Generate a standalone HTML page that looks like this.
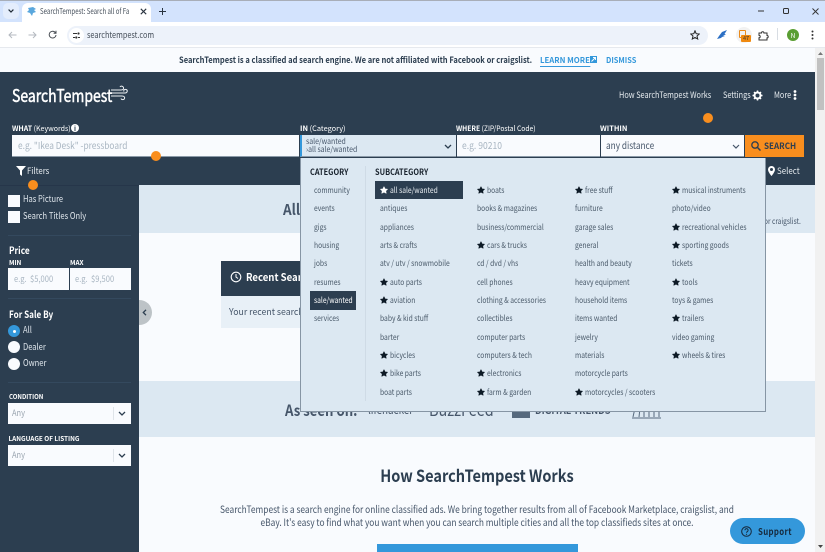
<!DOCTYPE html>
<html lang="en"><head><meta charset="utf-8"><title>SearchTempest</title>
<style>
*{box-sizing:border-box}
html,body{margin:0;padding:0}
body{width:825px;height:552px;overflow:hidden;position:relative;background:#f9fbfe;font-family:"Noto Sans CJK JP","Liberation Sans",sans-serif;color:#2c3e50}
.a{position:absolute;white-space:nowrap}
.t{transform-origin:0 50%}
body>svg{position:absolute;display:block}
.lbl{font-size:7.400px;line-height:10px;color:#fff}
.lbl b{font-weight:700}
.ph{color:#a9b6c2}
.inp{position:absolute;background:#f9fbfe}
ul{position:absolute;margin:0;padding:0;list-style:none;font-size:8px;line-height:18.350px;color:#4a5a6a;white-space:nowrap;transform:scaleX(.84);transform-origin:0 0}
li svg{display:inline-block;width:9.500px;height:8px;margin-right:2.400px;vertical-align:-1px}
.sd{font-size:9px;color:#dfe6ec;line-height:12px;transform:scaleX(.84)}
.cb{position:absolute;left:8px;width:12px;height:12px;background:#f9fbfe}
.rd{position:absolute;left:8px;width:12px;height:12px;background:#f9fbfe;border-radius:50%}
.hr{position:absolute;left:8px;width:123px;height:1px;background:#34495e}
.dot{position:absolute;width:10px;height:10px;border-radius:50%;background:#f98e1e}
</style></head><body>
<svg width="0" height="0" style="position:absolute"><symbol id="s" viewBox="0 0 10 10" preserveAspectRatio="none"><path d="M5 1 6.300 3.700 9.300 4.100 7.100 6.100 7.700 9 5 7.600 2.300 9 2.900 6.100 .7 4.100 3.700 3.700z" fill="currentColor" stroke="currentColor" stroke-width=".9" stroke-linejoin="round"/></symbol></svg>

<!-- browser chrome -->
<div class="a" style="left:0;top:0;width:825px;height:22px;background:#d3e3fd;border-top:1px solid #a8aeb8"></div>
<div class="a" style="left:3px;top:3px;width:16px;height:16px;border-radius:5px;background:#e4edfc"></div>
<svg style="left:8px;top:9px" width="6" height="4" viewBox="0 0 6 4"><path d="M.6.6 3 3 5.400.6" fill="none" stroke="#1f2a36" stroke-width="1.200"/></svg>
<div class="a" style="left:22px;top:3px;width:129px;height:20px;background:#fff;border-radius:6px 6px 0 0"></div>
<svg style="left:27px;top:7px" width="10" height="9" viewBox="0 0 10 9"><path d="M1 1 6 0l3 2-2 1 2 2-3 1-1 3-2-3-3-1 2-2z" fill="#5aa7dd"/></svg>
<div class="a t" style="left:40px;top:5px;font-size:7.800px;line-height:13px;color:#46505c;width:118px;overflow:hidden;transform:scaleX(.78)">SearchTempest: Search all of Fa</div>
<svg style="left:140px;top:8px" width="7" height="7" viewBox="0 0 7 7"><path d="M.8.8 6.200 6.200M6.200.8.8 6.200" stroke="#2a3440" stroke-width="1.100"/></svg>
<svg style="left:158px;top:7px" width="9" height="9" viewBox="0 0 9 9"><path d="M4.500 1v7M1 4.500h7" stroke="#2a3440" stroke-width="1"/></svg>
<svg style="left:757px;top:10px" width="8" height="2" viewBox="0 0 8 2"><path d="M1 1h6" stroke="#333" stroke-width="1"/></svg>
<div class="a" style="left:783px;top:8px;width:6px;height:6px;border:1px solid #333;border-radius:1.500px"></div>
<svg style="left:812px;top:8px" width="7" height="7" viewBox="0 0 7 7"><path d="M.5.5 6.500 6.500M6.500.5.5 6.500" stroke="#333" stroke-width=".9"/></svg>

<div class="a" style="left:0;top:22px;width:825px;height:26px;background:#fff;border-bottom:1px solid #e6e9ee"></div>
<svg style="left:8px;top:31px" width="9" height="8" viewBox="0 0 9 8"><path d="M8.500 4H1M4 1 1 4l3 3" fill="none" stroke="#b4b9c0" stroke-width="1"/></svg>
<svg style="left:28px;top:31px" width="9" height="8" viewBox="0 0 9 8"><path d="M.5 4H8M5 1l3 3-3 3" fill="none" stroke="#b4b9c0" stroke-width="1"/></svg>
<svg style="left:48px;top:30px" width="9" height="9" viewBox="0 0 9 9"><path d="M7.600 3A3.400 3.400 0 1 0 8 5M8 .8V3.200H5.600" fill="none" stroke="#4a4f55" stroke-width="1"/></svg>
<div class="a" style="left:67px;top:26px;width:641px;height:19px;border-radius:10px;background:#edf2fa"></div>
<div class="a" style="left:69px;top:28px;width:15px;height:15px;border-radius:50%;background:#fff"></div>
<svg style="left:73px;top:32px" width="7" height="7" viewBox="0 0 7 7"><path d="M0 1.500h4M0 5.500h2M5 5.500h2" stroke="#333" stroke-width="1"/><circle cx="5.500" cy="1.500" r="1.100" fill="#333"/><circle cx="3.300" cy="5.500" r="1.100" fill="#333"/></svg>
<div class="a t" style="left:87px;top:28px;font-size:8.600px;line-height:15px;color:#444d58;transform:scaleX(.85)">searchtempest.com</div>
<svg style="left:690px;top:30px" width="10" height="10" viewBox="0 0 10 10"><path d="M5 .8 6.200 3.700 9.300 4 7 6l.7 3L5 7.400 2.300 9 3 6 .7 4l3.100-.3z" fill="none" stroke="#222" stroke-width="1"/></svg>
<svg style="left:717px;top:30px" width="11" height="10" viewBox="0 0 11 10"><path d="M10 0 5 2 2 6 0 9l4-1 1-1 3-1-2-.5 3-1-1.500-.5z" fill="#2b6fc4"/></svg>
<div class="a" style="left:736px;top:27px;width:16px;height:16px;border-radius:50%;background:#f2f2f2"></div>
<div class="a" style="left:739px;top:30px;width:7px;height:8px;border:1.500px solid #e98a1a;border-radius:1px"></div>
<div class="a" style="left:741px;top:35px;width:10px;height:7px;background:#f08a10;color:#333;font-size:5.500px;line-height:7px;text-align:center;border-radius:1px">47</div>
<svg style="left:758px;top:30px" width="11" height="11" viewBox="0 0 11 11"><path d="M1 3h2.500a1.200 1.200 0 0 1 2.400 0H9v2.500a1.200 1.200 0 0 1 0 2.400V10H1V7.800a1.200 1.200 0 0 0 0-2.400z" fill="none" stroke="#333" stroke-width="1"/></svg>
<div class="a" style="left:777px;top:28px;width:1px;height:12px;background:#d8dde3"></div>
<div class="a" style="left:787px;top:29px;width:12px;height:12px;border-radius:50%;background:#5a9e32;color:#fff;font-size:6.500px;line-height:12px;text-align:center">N</div>
<svg style="left:811px;top:30px" width="3" height="10" viewBox="0 0 3 10"><circle cx="1.500" cy="1.500" r="1" fill="#333"/><circle cx="1.500" cy="5" r="1" fill="#333"/><circle cx="1.500" cy="8.500" r="1" fill="#333"/></svg>

<!-- infobar -->
<div class="a" style="left:0;top:48px;width:815px;height:24px;background:#f9fbfe"></div>
<div class="a t" style="left:179px;top:52px;font-size:8.700px;line-height:15px;font-weight:700;color:#2c3e50;transform:scaleX(.868)">SearchTempest is a classified ad search engine. We are not affiliated with Facebook or craigslist.</div>
<div class="a t" style="left:540px;top:53px;font-size:8.200px;line-height:14px;font-weight:700;color:#3498db;border-bottom:1px solid #3498db;height:14px;transform:scaleX(.95)">LEARN MORE</div>
<div class="a" style="left:590px;top:56px;width:7px;height:7px;background:#3498db"></div>
<svg style="left:591px;top:57px" width="5" height="5" viewBox="0 0 5 5"><path d="M.5 4.500 4.500.5M2 .5h2.500V3" fill="none" stroke="#fff" stroke-width=".9"/></svg>
<div class="a t" style="left:606px;top:53px;font-size:8.200px;line-height:14px;font-weight:700;color:#3498db;transform:scaleX(.91)">DISMISS</div>

<!-- scrollbar -->
<div class="a" style="left:815px;top:48px;width:10px;height:504px;background:#f1f1f1"></div>
<div class="a" style="left:817px;top:58px;width:7px;height:52px;background:#c1c1c1"></div>
<svg style="left:818px;top:52px" width="5" height="3" viewBox="0 0 5 3"><path d="M2.500 0 5 3H0z" fill="#777"/></svg>
<svg style="left:818px;top:545px" width="5" height="3" viewBox="0 0 5 3"><path d="M0 0h5L2.500 3z" fill="#444"/></svg>

<!-- dark header -->
<div class="a" style="left:0;top:72px;width:815px;height:113px;background:#2c3e50"></div>
<div class="a" style="left:0;top:185px;width:139px;height:367px;background:#2c3e50"></div>
<div class="a t" style="left:12px;top:84px;font-size:17.500px;line-height:24px;color:#fff;-webkit-text-stroke:.5px #fff;transform:scaleX(.8)">SearchTempest</div>
<svg style="left:110px;top:84px" width="19" height="18" viewBox="0 0 19 18"><g fill="none" stroke="#eef2f5" stroke-width="1"><path d="M1 6h10c2 0 3-1 2.500-2.500S10.500 1.500 10 3"/><path d="M2 9h13c2.500 0 3-3 1-3.500S13.500 6.500 14 7.500"/><path d="M1 12h11c2 0 3 1 2.500 2.500S11.500 16 11 14.500"/></g></svg>
<div class="a t" style="left:619px;top:88px;font-size:8.700px;line-height:14px;color:#e6ebef;transform:scaleX(.84)">How SearchTempest Works</div>
<div class="a t" style="left:723px;top:88px;font-size:8.700px;line-height:14px;color:#e6ebef;transform:scaleX(.84)">Settings</div>
<svg style="left:752px;top:90px" width="11" height="11" viewBox="0 0 11 11"><circle cx="5.500" cy="5.500" r="3" fill="none" stroke="#fff" stroke-width="2"/><path d="M5.500 .5v2M5.500 8.500v2M.5 5.500h2M8.500 5.500h2M2 2l1.400 1.400M7.600 7.600 9 9M9 2 7.600 3.400M3.400 7.600 2 9" stroke="#fff" stroke-width="1.500"/></svg>
<div class="a t" style="left:774px;top:88px;font-size:8.700px;line-height:14px;color:#e6ebef;transform:scaleX(.84)">More</div>
<svg style="left:793px;top:90px" width="4" height="10" viewBox="0 0 4 10"><circle cx="2" cy="1.500" r="1.400" fill="#fff"/><circle cx="2" cy="5" r="1.400" fill="#fff"/><circle cx="2" cy="8.500" r="1.400" fill="#fff"/></svg>

<!-- search form -->
<div class="a lbl t" style="left:12px;top:124px;transform:scaleX(.95)"><b>WHAT</b> (Keywords)</div>
<div class="a" style="left:71px;top:124px;width:8px;height:8px;border-radius:50%;background:#fff;color:#2c3e50;font-size:6.500px;line-height:8px;text-align:center;font-weight:700">i</div>
<div class="a lbl" style="left:300px;top:124px"><b>IN</b> (Category)</div>
<div class="a lbl t" style="left:456px;top:124px;transform:scaleX(.91)"><b>WHERE</b> (ZIP/Postal Code)</div>
<div class="a lbl" style="left:600px;top:124px"><b>WITHIN</b></div>

<div class="inp" style="left:12px;top:135px;width:287px;height:22px;border-bottom:1px solid #8b9aa8"></div>
<div class="a ph t" style="left:18px;top:138px;font-size:9.500px;line-height:15px;transform:scaleX(.88)">e.g. "Ikea Desk" -pressboard</div>
<div class="a" style="left:300px;top:135px;width:156px;height:22px;background:#dce8f2;border-left:2px solid #3498db;border-bottom:1px solid #8b9aa8"></div>
<div class="a t" style="left:306px;top:138px;font-size:7.600px;line-height:7.500px;color:#46566a;transform:scaleX(.91)">sale/wanted<br>&rsaquo;all sale/wanted</div>
<svg style="left:444px;top:144px" width="8" height="5" viewBox="0 0 8 5"><path d="M1 1l3 3 3-3" fill="none" stroke="#2c3e50" stroke-width="1.300"/></svg>
<div class="inp" style="left:457px;top:135px;width:143px;height:22px;border-bottom:1px solid #8b9aa8"></div>
<div class="a ph t" style="left:462px;top:138px;font-size:9.500px;line-height:15px;transform:scaleX(.9)">e.g. 90210</div>
<div class="inp" style="left:601px;top:135px;width:143px;height:22px;border-bottom:1px solid #8b9aa8"></div>
<div class="a t" style="left:606px;top:138px;font-size:9.500px;line-height:15px;color:#46566a;transform:scaleX(.87)">any distance</div>
<svg style="left:732px;top:144px" width="8" height="5" viewBox="0 0 8 5"><path d="M1 1l3 3 3-3" fill="none" stroke="#46566a" stroke-width="1.200"/></svg>
<div class="a" style="left:745px;top:135px;width:59px;height:22px;background:#f98e1e"></div>
<svg style="left:751px;top:141px" width="10" height="10" viewBox="0 0 10 10"><circle cx="4" cy="4" r="3.200" fill="none" stroke="#2c3e50" stroke-width="1.300"/><path d="M6.500 6.500 9.500 9.500" stroke="#2c3e50" stroke-width="1.500"/></svg>
<div class="a t" style="left:764px;top:139px;font-size:8.600px;line-height:14px;font-weight:700;color:#2c3e50;transform:scaleX(.94)">SEARCH</div>

<svg style="left:16px;top:166px" width="10" height="10" viewBox="0 0 10 10"><path d="M0 0h10L6 4.500V10L4 8.500V4.500z" fill="#fff"/></svg>
<div class="a t" style="left:27px;top:164px;font-size:8.800px;line-height:14px;color:#e6ebef;transform:scaleX(.88)">Filters</div>
<svg style="left:768px;top:166px" width="7" height="10" viewBox="0 0 7 10"><path fill-rule="evenodd" d="M3.500 0A3.500 3.500 0 0 1 7 3.500C7 6 3.500 10 3.500 10S0 6 0 3.500A3.500 3.500 0 0 1 3.500 0zm0 2a1.500 1.500 0 1 0 0 3 1.500 1.500 0 0 0 0-3z" fill="#fff"/></svg>
<div class="a t" style="left:777px;top:164px;font-size:8.800px;line-height:14px;color:#e6ebef;transform:scaleX(.9)">Select</div>

<!-- sidebar -->
<div class="a" style="left:0;top:185px;width:139px;height:1px;background:#26364a"></div>
<div class="cb" style="top:195px"></div>
<div class="a sd t" style="left:23px;top:193px">Has Picture</div>
<div class="cb" style="top:211px"></div>
<div class="a sd t" style="left:23px;top:210px">Search Titles Only</div>
<div class="hr" style="top:235px"></div>
<div class="a t" style="left:9px;top:243px;font-size:9.800px;line-height:14px;font-weight:700;color:#fff;transform:scaleX(.85)">Price</div>
<div class="a lbl" style="left:9px;top:258px;font-size:6.400px"><b>MIN</b></div>
<div class="a lbl" style="left:70px;top:258px;font-size:6.400px"><b>MAX</b></div>
<div class="inp" style="left:8px;top:268px;width:61px;height:22px"></div>
<div class="inp" style="left:70px;top:268px;width:61px;height:22px"></div>
<div class="a ph t" style="left:14px;top:273px;font-size:8.600px;line-height:13px;transform:scaleX(.88)">e.g. &nbsp;$5,000</div>
<div class="a ph t" style="left:75px;top:273px;font-size:8.600px;line-height:13px;transform:scaleX(.88)">e.g. &nbsp;$9,500</div>
<div class="hr" style="top:298px"></div>
<div class="a t" style="left:9px;top:307px;font-size:9.800px;line-height:14px;font-weight:700;color:#fff;transform:scaleX(.83)">For Sale By</div>
<div class="rd" style="top:325px;background:#3498db"></div>
<div class="a" style="left:12.500px;top:329.500px;width:3px;height:3px;border-radius:50%;background:#fff"></div>
<div class="a sd t" style="left:23px;top:324px">All</div>
<div class="rd" style="top:341px"></div>
<div class="a sd t" style="left:23px;top:341px">Dealer</div>
<div class="rd" style="top:358px"></div>
<div class="a sd t" style="left:23px;top:357px">Owner</div>
<div class="hr" style="top:382px"></div>
<div class="a lbl t" style="left:8.500px;top:392px;font-size:6.400px;transform:scaleX(.95)"><b>CONDITION</b></div>
<div class="inp" style="left:8px;top:403px;width:123px;height:21px"></div>
<div class="a" style="left:113px;top:407px;width:1px;height:13px;background:#dfe4e9"></div>
<div class="a t" style="left:12px;top:407px;font-size:8.600px;line-height:13px;color:#9aa5b0;transform:scaleX(.87)">Any</div>
<svg style="left:118px;top:411px" width="8" height="5" viewBox="0 0 8 5"><path d="M1 1l3 3 3-3" fill="none" stroke="#2c3e50" stroke-width="1.300"/></svg>
<div class="a lbl" style="left:8.500px;top:434px;font-size:6.400px"><b>LANGUAGE OF LISTING</b></div>
<div class="inp" style="left:8px;top:445px;width:123px;height:21px"></div>
<div class="a" style="left:113px;top:449px;width:1px;height:13px;background:#dfe4e9"></div>
<div class="a t" style="left:12px;top:449px;font-size:8.600px;line-height:13px;color:#9aa5b0;transform:scaleX(.87)">Any</div>
<svg style="left:118px;top:453px" width="8" height="5" viewBox="0 0 8 5"><path d="M1 1l3 3 3-3" fill="none" stroke="#2c3e50" stroke-width="1.300"/></svg>

<!-- main content -->
<div class="a" style="left:139px;top:185px;width:676px;height:48px;background:#dce8f2"></div>
<div class="a t" style="left:283px;top:200px;font-size:15px;line-height:20px;font-weight:700;color:#46566a;transform:scaleX(.9)">All</div>
<div class="a t" style="left:764px;top:215px;font-size:8.200px;line-height:12px;color:#46566a;transform:scaleX(.8)">or craigslist.</div>
<div class="a" style="left:139px;top:300px;width:13px;height:25px;background:#bdc3c7;border-radius:0 13px 13px 0"></div>
<svg style="left:142px;top:309px" width="5" height="7" viewBox="0 0 5 7"><path d="M4 .8 1.300 3.500 4 6.200" fill="none" stroke="#2c3e50" stroke-width="1.300"/></svg>
<div class="a" style="left:221px;top:261px;width:90px;height:35px;background:#2c3e50"></div>
<svg style="left:230px;top:271px" width="12" height="12" viewBox="0 0 12 12"><circle cx="6" cy="6" r="4.800" fill="none" stroke="#fff" stroke-width="1.100"/><path d="M6 3v3l2 1.500" fill="none" stroke="#fff" stroke-width="1"/></svg>
<div class="a t" style="left:246px;top:269px;font-size:10.300px;line-height:16px;font-weight:700;color:#fff;transform:scaleX(.93)">Recent Sear</div>
<div class="a" style="left:221px;top:296px;width:90px;height:32px;background:#e8f0f7"></div>
<div class="a t" style="left:229px;top:304px;font-size:9.200px;line-height:14px;color:#46566a;transform:scaleX(.95)">Your recent search</div>

<div class="a" style="left:139px;top:381px;width:676px;height:56px;background:#dce8f2"></div>
<div class="a t" style="left:285px;top:400px;font-size:15.500px;line-height:20px;font-weight:700;color:#46566a;transform:scaleX(.85)">As seen on:</div>
<div class="a t" style="left:368px;top:401px;font-size:12px;line-height:18px;color:#46566a;transform:scaleX(.82)">lifehacker</div>
<div class="a t" style="left:429px;top:399px;font-size:17px;line-height:20px;color:#46566a;transform:scaleX(.85)">BuzzFeed</div>
<div class="a" style="left:512px;top:400px;width:18px;height:18px;background:#56697d"></div>
<div class="a t" style="left:535px;top:404px;font-size:10px;line-height:12px;font-weight:700;color:#46566a;transform:scaleX(.93)">DIGITAL TRENDS</div>
<svg style="left:632px;top:405px" width="30" height="14" viewBox="0 0 30 14"><path d="M1 12 3 3M7 12 8 3M12 12V3M17 12V3M22 12V3M27 12V3M0 13h29M0 5h29" stroke="#56697d" stroke-width="1" fill="none"/></svg>

<div class="a" style="left:139px;top:464px;width:676px;text-align:center;font-size:16.800px;line-height:22px;font-weight:700;color:#2c3e50;transform:scaleX(.866)">How SearchTempest Works</div>
<div class="a" style="left:139px;top:502px;width:676px;text-align:center;font-size:10px;line-height:13.300px;color:#46566a;transform:scaleX(.836)">SearchTempest is a search engine for online classified ads. We bring together results from all of Facebook Marketplace, craigslist, and<br>eBay. It's easy to find what you want when you can search multiple cities and all the top classifieds sites at once.</div>
<div class="a" style="left:377px;top:544px;width:201px;height:8px;background:#3498db"></div>

<!-- dropdown -->
<div class="a" style="left:300px;top:158px;width:466px;height:254px;background:#dce8f2;border:1px solid #8695a4;border-top:none"></div>
<div class="a t" style="left:309.500px;top:166px;font-size:8.300px;line-height:12px;font-weight:700;color:#17212c;transform:scaleX(.89)">CATEGORY</div>
<div class="a t" style="left:375px;top:166px;font-size:8.300px;line-height:12px;font-weight:700;color:#17212c;transform:scaleX(.885)">SUBCATEGORY</div>
<div class="a" style="left:365px;top:166px;width:1px;height:235px;background:#cfdbe6"></div>
<div class="a" style="left:309.500px;top:291px;width:46.500px;height:19px;background:#2c3e50"></div>
<div class="a" style="left:375px;top:181px;width:88px;height:18px;background:#2c3e50"></div>
<ul style="left:313.500px;top:182px">
<li>community</li><li>events</li><li>gigs</li><li>housing</li><li>jobs</li><li>resumes</li><li style="color:#fff">sale/wanted</li><li>services</li>
</ul>
<ul style="left:380px;top:182px;color:#4a5a6a">
<li style="color:#e6ebef"><svg style="color:#fff"><use href="#s"/></svg>all sale/wanted</li><li>antiques</li><li>appliances</li><li>arts &amp; crafts</li><li>atv / utv / snowmobile</li><li><svg style="color:#0d1a26"><use href="#s"/></svg>auto parts</li><li><svg style="color:#0d1a26"><use href="#s"/></svg>aviation</li><li>baby &amp; kid stuff</li><li>barter</li><li><svg style="color:#0d1a26"><use href="#s"/></svg>bicycles</li><li><svg style="color:#0d1a26"><use href="#s"/></svg>bike parts</li><li>boat parts</li>
</ul>
<ul style="left:477px;top:182px">
<li><svg style="color:#0d1a26"><use href="#s"/></svg>boats</li><li>books &amp; magazines</li><li>business/commercial</li><li><svg style="color:#0d1a26"><use href="#s"/></svg>cars &amp; trucks</li><li>cd / dvd / vhs</li><li>cell phones</li><li>clothing &amp; accessories</li><li>collectibles</li><li>computer parts</li><li>computers &amp; tech</li><li><svg style="color:#0d1a26"><use href="#s"/></svg>electronics</li><li><svg style="color:#0d1a26"><use href="#s"/></svg>farm &amp; garden</li>
</ul>
<ul style="left:574.500px;top:182px">
<li><svg style="color:#0d1a26"><use href="#s"/></svg>free stuff</li><li>furniture</li><li>garage sales</li><li>general</li><li>health and beauty</li><li>heavy equipment</li><li>household items</li><li>items wanted</li><li>jewelry</li><li>materials</li><li>motorcycle parts</li><li><svg style="color:#0d1a26"><use href="#s"/></svg>motorcycles / scooters</li>
</ul>
<ul style="left:672px;top:182px">
<li><svg style="color:#0d1a26"><use href="#s"/></svg>musical instruments</li><li>photo/video</li><li><svg style="color:#0d1a26"><use href="#s"/></svg>recreational vehicles</li><li><svg style="color:#0d1a26"><use href="#s"/></svg>sporting goods</li><li>tickets</li><li><svg style="color:#0d1a26"><use href="#s"/></svg>tools</li><li>toys &amp; games</li><li><svg style="color:#0d1a26"><use href="#s"/></svg>trailers</li><li>video gaming</li><li><svg style="color:#0d1a26"><use href="#s"/></svg>wheels &amp; tires</li>
</ul>

<!-- support -->
<div class="a" style="left:730px;top:518px;width:75px;height:26px;border-radius:13px;background:#3498db"></div>
<svg style="left:741px;top:526px" width="11" height="11" viewBox="0 0 11 11"><circle cx="5.500" cy="5.500" r="4.800" fill="none" stroke="#16293c" stroke-width="1"/><path d="M3.900 4.300a1.600 1.600 0 1 1 2.500 1.300c-.6.400-.9.700-.9 1.200" fill="none" stroke="#16293c" stroke-width="1"/><circle cx="5.500" cy="8.300" r=".6" fill="#16293c"/></svg>
<div class="a t" style="left:758px;top:524px;font-size:9.200px;line-height:14px;font-weight:700;color:#16293c;letter-spacing:.4px;transform:scaleX(.85)">Support</div>

<!-- dots -->
<div class="dot" style="left:151px;top:151px"></div>
<div class="dot" style="left:28px;top:180px"></div>
<div class="dot" style="left:703px;top:113px"></div>
</body></html>
